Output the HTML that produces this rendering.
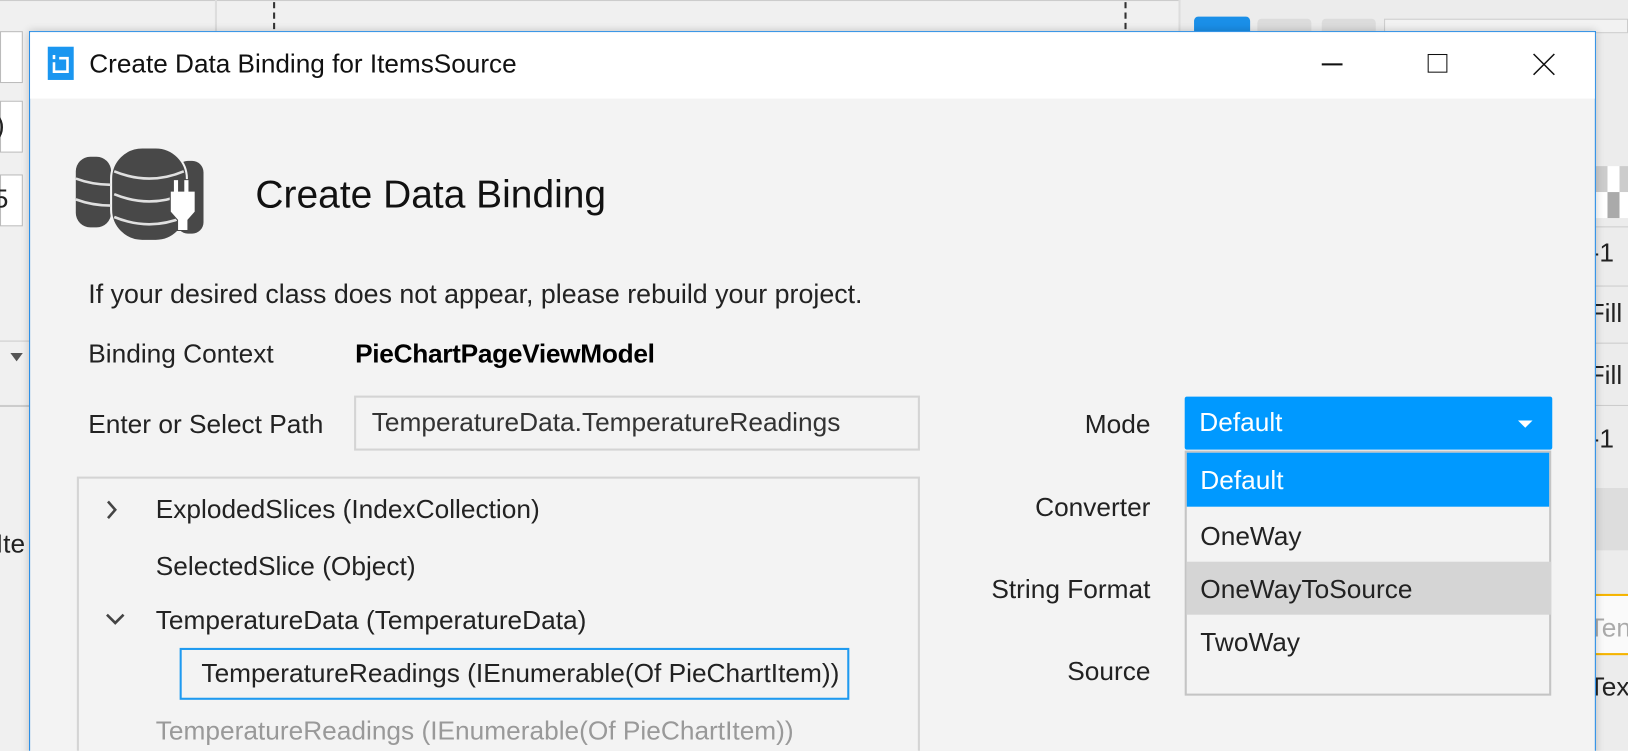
<!DOCTYPE html>
<html><head><meta charset="utf-8"><style>
*{margin:0;padding:0;box-sizing:border-box}
body{width:1628px;height:750px;overflow:hidden;background:#f0f0f0;font-family:"Liberation Sans",sans-serif;color:#222}
#w{position:absolute;left:0;top:0;width:1568px;height:723px;transform:scale(1.0383);transform-origin:0 0;overflow:hidden}
.a{position:absolute}
.t{position:absolute;font-size:25.3px;white-space:nowrap;line-height:1}
</style></head><body><div id="w">
<div class="a" style="left:0;top:0;width:1568px;height:30px;background:#f0f0f0;border-top:1px solid #ccc"></div>
<div class="a" style="left:207px;top:0;width:2px;height:30px;background:#ddd"></div>
<div class="a" style="left:263px;top:2px;width:2px;height:26px;border-left:2px dashed #333"></div>
<div class="a" style="left:1083px;top:2px;width:2px;height:26px;border-left:2px dashed #333"></div>
<div class="a" style="left:1135px;top:0;width:2px;height:723px;background:#ddd"></div>
<div class="a" style="left:1137px;top:0;width:431px;height:723px;background:#ececec"></div>
<div class="a" style="left:1150px;top:16px;width:54px;height:16px;background:#1a8fe8;border-radius:4px 4px 0 0"></div>
<div class="a" style="left:1211px;top:18px;width:52px;height:14px;background:#dcdcdc;border-radius:4px 4px 0 0"></div>
<div class="a" style="left:1273px;top:18px;width:52px;height:14px;background:#dcdcdc;border-radius:4px 4px 0 0"></div>
<div class="a" style="left:1333px;top:18px;width:235px;height:14px;background:#f2f2f2;border:1px solid #ccc"></div>
<div class="a" style="left:1536px;top:160px;width:32px;height:25px;background:repeating-linear-gradient(90deg,#ccc 0 12px,#fff 12px 24px)"></div>
<div class="a" style="left:1536px;top:185px;width:32px;height:25px;background:repeating-linear-gradient(90deg,#fff 0 12px,#aaa 12px 24px)"></div>
<div class="a" style="left:1536px;top:218px;width:32px;height:1px;background:#ccc"></div>
<div class="a" style="left:1536px;top:275px;width:32px;height:1px;background:#ccc"></div>
<div class="a" style="left:1536px;top:330px;width:32px;height:1px;background:#ccc"></div>
<div class="a" style="left:1536px;top:390px;width:32px;height:1px;background:#ccc"></div>
<div class="a" style="left:1536px;top:470px;width:32px;height:60px;background:#ddd"></div>
<div class="t" style="left:1532px;top:232px">-1</div>
<div class="t" style="left:1530px;top:290px">Fill</div>
<div class="t" style="left:1530px;top:350px">Fill</div>
<div class="t" style="left:1532px;top:411px">-1</div>
<div class="a" style="left:1536px;top:572px;width:32px;height:2px;background:#f5b400"></div>
<div class="a" style="left:1536px;top:574px;width:32px;height:55px;background:#fafafa"></div>
<div class="a" style="left:1536px;top:629px;width:32px;height:2px;background:#f5b400"></div>
<div class="t" style="left:1530px;top:593px;color:#aaa">Ten</div>
<div class="t" style="left:1530px;top:650px">Tex</div>
<div class="a" style="left:0;top:30px;width:22px;height:50px;background:#fff;border:1px solid #bbb"></div>
<div class="a" style="left:0;top:97px;width:22px;height:50px;background:#fff;border:1px solid #bbb"></div>
<div class="a" style="left:0;top:168px;width:22px;height:50px;background:#fff;border:1px solid #bbb"></div>
<div class="t" style="left:-4px;top:109px">)</div>
<div class="t" style="left:-6px;top:180px">5</div>
<div class="a" style="left:0;top:328px;width:28px;height:1px;background:#ccc"></div>
<div class="a" style="left:0;top:390px;width:28px;height:2px;background:#ccc"></div>
<div class="a" style="left:10px;top:340px;width:0;height:0;border-left:6px solid transparent;border-right:6px solid transparent;border-top:8px solid #555"></div>
<div class="t" style="left:-4px;top:512px">Ite</div>
<div class="a" style="left:28px;top:30px;width:1509px;height:720px;background:#f3f3f3;border:1px solid #1e88e5;border-bottom:none;box-shadow:0 0 8px rgba(0,0,0,.2)"></div>
<div class="a" style="left:29px;top:31px;width:1507px;height:64px;background:#fff"></div>
<div class="a" style="left:46px;top:45px;width:25px;height:32px;background:#1a96f0"></div>
<svg class="a" style="left:46px;top:45px" width="25" height="32"><path d="M6 8v4 M6 15v9h13V11h-8" stroke="#fff" stroke-width="2.5" fill="none"/></svg>
<div class="t" style="left:86px;top:50px;font-size:25.2px;color:#111">Create Data Binding for ItemsSource</div>
<div class="a" style="left:1273px;top:61px;width:20px;height:1.5px;background:#111"></div>
<div class="a" style="left:1375px;top:52px;width:19px;height:18px;border:1.5px solid #111"></div>
<svg class="a" style="left:1476px;top:51px" width="22" height="22"><path d="M1 1L21 21M21 1L1 21" stroke="#111" stroke-width="1.5"/></svg>
<svg class="a" style="left:70px;top:140px" width="140" height="100">
<g fill="#484848">
<rect x="100" y="15" width="26" height="70" rx="11"/>
<rect x="3" y="11" width="34" height="68" rx="14"/>
</g>
<rect x="37" y="2" width="73" height="90" rx="30" fill="#484848" stroke="#f3f3f3" stroke-width="2"/>
<g fill="none" stroke="#e0e0e0" stroke-width="2.5">
<path d="M3 32q16 6 34 6 M3 52q16 6 34 6"/>
<path d="M40 25q34 14 67 0 M40 47q34 14 67 0 M40 69q34 14 67 0"/>
</g>
<path d="M97 33h5v11h5V33h5v11h6v20l-7 8v10h-10v-10l-7-8V44h3z" fill="#fff" stroke="#484848" stroke-width="1"/>
</svg>
<div class="t" style="left:246px;top:169px;font-size:37.5px;color:#111">Create Data Binding</div>
<div class="t" style="left:85px;top:272px;font-size:25.8px">If your desired class does not appear, please rebuild your project.</div>
<div class="t" style="left:85px;top:329px">Binding Context</div>
<div class="t" style="left:342px;top:329px;font-weight:bold;color:#000;letter-spacing:-0.3px">PieChartPageViewModel</div>
<div class="t" style="left:85px;top:397px">Enter or Select Path</div>
<div class="a" style="left:341px;top:381px;width:545px;height:53px;border:2px solid #d4d4d4;background:#f3f3f3"></div>
<div class="t" style="left:358px;top:395px;color:#333">TemperatureData.TemperatureReadings</div>
<div class="a" style="left:74px;top:459px;width:812px;height:300px;border:2px solid #d4d4d4"></div>
<svg class="a" style="left:100px;top:480px" width="16" height="22"><path d="M4 3l7 8-7 8" stroke="#444" stroke-width="2.5" fill="none"/></svg>
<div class="t" style="left:150px;top:479px">ExplodedSlices (IndexCollection)</div>
<div class="t" style="left:150px;top:534px">SelectedSlice (Object)</div>
<svg class="a" style="left:100px;top:588px" width="22" height="16"><path d="M3 4l8 8 8-8" stroke="#444" stroke-width="2.5" fill="none"/></svg>
<div class="t" style="left:150px;top:586px">TemperatureData (TemperatureData)</div>
<div class="a" style="left:173px;top:624px;width:645px;height:50px;border:2px solid #1e9af0"></div>
<div class="t" style="left:194px;top:637px">TemperatureReadings (IEnumerable(Of PieChartItem))</div>
<div class="t" style="left:150px;top:692px;color:#999">TemperatureReadings (IEnumerable(Of PieChartItem))</div>
<div class="t" style="left:1108px;top:397px;transform:translateX(-100%)">Mode</div>
<div class="t" style="left:1108px;top:477px;transform:translateX(-100%)">Converter</div>
<div class="t" style="left:1108px;top:556px;transform:translateX(-100%)">String Format</div>
<div class="t" style="left:1108px;top:635px;transform:translateX(-100%)">Source</div>
<div class="a" style="left:1141px;top:382px;width:354px;height:51px;background:#0099ff;border-radius:2px"></div>
<div class="t" style="left:1155px;top:395px;color:#fff">Default</div>
<div class="a" style="left:1462px;top:405px;width:0;height:0;border-left:7px solid transparent;border-right:7px solid transparent;border-top:7px solid #fff"></div>
<div class="a" style="left:1141px;top:434px;width:353px;height:236px;border:2px solid #c4c4c4;background:#f3f3f3"></div>
<div class="a" style="left:1143px;top:436px;width:349px;height:52px;background:#0099ff"></div>
<div class="a" style="left:1143px;top:541px;width:351px;height:51px;background:#d5d5d5"></div>
<div class="t" style="left:1156px;top:451px;color:#fff">Default</div>
<div class="t" style="left:1156px;top:505px">OneWay</div>
<div class="t" style="left:1156px;top:556px">OneWayToSource</div>
<div class="t" style="left:1156px;top:607px">TwoWay</div>
</div></body></html>
